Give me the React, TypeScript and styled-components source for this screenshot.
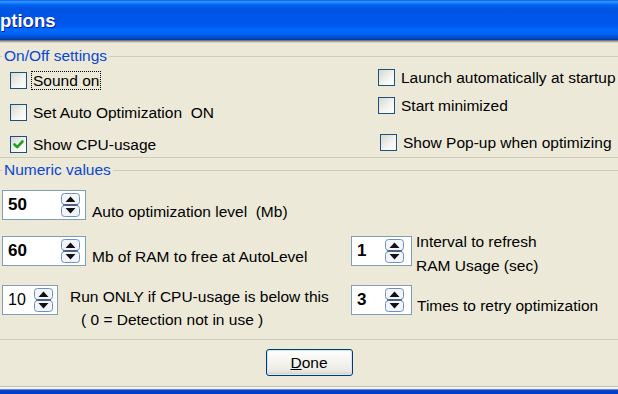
import React from 'react';
import styled, { createGlobalStyle } from 'styled-components';

const Global = createGlobalStyle`
  html, body { margin: 0; padding: 0; background: #ECE9D8; }
  body { font-family: "Liberation Sans", Arial, sans-serif; }
  * { box-sizing: border-box; }
`;

const Window = styled.div`
  width: 618px;
  height: 394px;
  overflow: hidden;
  display: flex;
  flex-direction: column;
  background: #ECE9D8;
  font-family: "Liberation Sans", Arial, sans-serif;
  font-size: 15.5px;
  color: #000;
`;

const TitleBar = styled.div`
  height: 40px;
  flex: none;
  display: flex;
  align-items: center;
  background: linear-gradient(
    to bottom,
    #0058ee 0%,
    #3593ff 4%,
    #288eff 6%,
    #127dff 8%,
    #036ffc 10%,
    #0262ee 14%,
    #0057e5 20%,
    #0054e3 24%,
    #0055eb 56%,
    #005bf5 66%,
    #026afe 76%,
    #0062ef 86%,
    #0052d6 92%,
    #0046c0 96%,
    #003aa8 100%
  );
`;

const TitleText = styled.span`
  color: #fff;
  font-weight: bold;
  font-size: 18.5px;
  padding-top: 2px;
  text-shadow: 1px 1px #0f1c89;
`;

const TitleEdge = styled.div`
  height: 3px;
  flex: none;
  background: linear-gradient(
    to bottom,
    #767676 0,
    #767676 1px,
    #a8a8a8 1px,
    #a8a8a8 2px,
    #d6d2c2 2px
  );
`;

const Body = styled.div`
  flex: 1;
  display: flex;
  flex-direction: column;
  padding-top: 4px;
`;

const Group = styled.fieldset<{ $mt?: number }>`
  margin: ${(p) => p.$mt ?? 0}px -12px 0;
  padding: 0;
  border: 1px solid #cfccbc;
  border-radius: 4px;
  min-width: 0;
`;

const Legend = styled.legend`
  margin-left: 13px;
  padding: 0 2px;
  color: #0a46d4;
  font-size: 15.5px;
  line-height: 18px;
`;

const CheckArea = styled.div`
  height: 92px;
  display: grid;
  grid-template-columns: 368px 1fr;
  padding-left: 21px;
`;

const CheckColumn = styled.div<{ $pt: number; $gap: number }>`
  display: flex;
  flex-direction: column;
  padding-top: ${(p) => p.$pt}px;
  gap: ${(p) => p.$gap}px;
`;

const CheckRow = styled.label<{ $mt?: number; $ml?: number }>`
  display: flex;
  align-items: center;
  gap: 6px;
  height: 17px;
  margin-top: ${(p) => p.$mt ?? 0}px;
  margin-left: ${(p) => p.$ml ?? 0}px;
  white-space: nowrap;
`;

const Box = styled.span`
  width: 17px;
  height: 17px;
  flex: none;
  border: 1px solid #1c5180;
  background: linear-gradient(135deg, #d8d8d2 0%, #f4f4f0 60%, #ffffff 100%);
  display: flex;
  align-items: center;
  justify-content: center;
`;

const FocusText = styled.span`
  outline: 1px dotted #000;
  outline-offset: 0;
  padding: 0 1px;
  margin-left: -1px;
  line-height: 17px;
`;

const NumArea = styled.div`
  height: 160px;
  display: flex;
  flex-direction: column;
  padding: 11px 0 0 13px;
`;

const NumRow = styled.div<{ $mt?: number }>`
  display: grid;
  grid-template-columns: 349px 1fr;
  grid-template-rows: 30px;
  height: 30px;
  flex: none;
  margin-top: ${(p) => p.$mt ?? 0}px;
`;

const NumCell = styled.div`
  display: flex;
  align-items: flex-end;
  height: 30px;
  white-space: nowrap;
`;

const SpinBox = styled.div<{ $w: number; $pr?: number }>`
  width: ${(p) => p.$w}px;
  height: 30px;
  flex: none;
  border: 1px solid #7f9db9;
  background: #fff;
  display: flex;
  align-items: center;
  padding: 0 ${(p) => p.$pr ?? 5}px 0 5px;
`;

const SpinValue = styled.span<{ $bold?: boolean }>`
  flex: 1;
  font-size: ${(p) => (p.$bold ? 17 : 16)}px;
  font-weight: ${(p) => (p.$bold ? 'bold' : 'normal')};
`;

const NumLabel = styled.span<{ $ml?: number; $mb?: number }>`
  margin-left: ${(p) => p.$ml ?? 6}px;
  margin-bottom: ${(p) => p.$mb ?? 0}px;
  line-height: 18px;
`;

const MultiLabel = styled.div<{ $ml: number; $mt: number; $lh: number }>`
  align-self: flex-start;
  margin-left: ${(p) => p.$ml}px;
  margin-top: ${(p) => p.$mt}px;
  line-height: ${(p) => p.$lh}px;
  display: flex;
  flex-direction: column;
`;

const Indented = styled.span<{ $indent: number }>`
  padding-left: ${(p) => p.$indent}px;
`;

const Footer = styled.div`
  height: 46px;
  flex: none;
  display: flex;
  justify-content: center;
  padding-top: 9px;
`;

const DoneButton = styled.button`
  width: 87px;
  height: 27px;
  border: 1px solid #003c74;
  border-radius: 3px;
  background: linear-gradient(to bottom, #ffffff 0%, #f6f5f0 40%, #ecebe6 80%, #d6d0c5 100%);
  box-shadow: inset 0 0 0 1px #cee7ff;
  font-family: "Liberation Sans", Arial, sans-serif;
  font-size: 15.5px;
  color: #000;
  padding: 0;
  u { text-decoration: underline; }
`;

const BottomEdge = styled.div`
  flex: 1;
  background: linear-gradient(
    to bottom,
    #c4c0ae 0,
    #c4c0ae 1px,
    #f4f2ea 1px,
    #f4f2ea 3px,
    #5a8ae8 3px,
    #5a8ae8 4px,
    #0a45d0 4px,
    #0836c4 100%
  );
`;

const Check = () => (
  <svg width="13" height="13" viewBox="0 0 13 13">
    <polyline points="2.5,6.5 5.2,9.2 10.5,3.5" fill="none" stroke="#21a121" strokeWidth="2.6" strokeLinecap="round" strokeLinejoin="round" />
  </svg>
);

const Spinner = () => (
  <svg width="19" height="24" viewBox="0 0 19 24" style={{ flex: 'none' }}>
    <rect x="0.5" y="0.5" width="18" height="11" rx="3" fill="#f2f5fc" stroke="#6f8ec4" />
    <rect x="0.5" y="12.5" width="18" height="11" rx="3" fill="#f2f5fc" stroke="#6f8ec4" />
    <line x1="2" y1="12" x2="17" y2="12" stroke="#2a3550" strokeWidth="1" />
    <path d="M4.5 9 L9.5 3.5 L14.5 9 Z" fill="#111" />
    <path d="M4.5 15 L9.5 20.5 L14.5 15 Z" fill="#111" />
  </svg>
);

const Spin: React.FC<{ value: string; w: number; pr?: number; bold?: boolean }> = ({ value, w, pr, bold }) => (
  <SpinBox $w={w} $pr={pr}>
    <SpinValue $bold={bold}>{value}</SpinValue>
    <Spinner />
  </SpinBox>
);

export default function App() {
  return (
    <>
      <Global />
      <Window>
        <TitleBar>
          <TitleText>ptions</TitleText>
        </TitleBar>
        <TitleEdge />
        <Body>
          <Group $mt={0}>
            <Legend>On/Off settings</Legend>
            <CheckArea>
              <CheckColumn $pt={7} $gap={15}>
                <CheckRow>
                  <Box />
                  <FocusText>Sound on</FocusText>
                </CheckRow>
                <CheckRow>
                  <Box />
                  <span>Set Auto Optimization&nbsp; ON</span>
                </CheckRow>
                <CheckRow>
                  <Box>
                    <Check />
                  </Box>
                  <span>Show CPU-usage</span>
                </CheckRow>
              </CheckColumn>
              <CheckColumn $pt={0} $gap={0}>
                <CheckRow $mt={4}>
                  <Box />
                  <span>Launch automatically at startup</span>
                </CheckRow>
                <CheckRow $mt={11}>
                  <Box />
                  <span>Start minimized</span>
                </CheckRow>
                <CheckRow $mt={20} $ml={2}>
                  <Box />
                  <span>Show Pop-up when optimizing</span>
                </CheckRow>
              </CheckColumn>
            </CheckArea>
          </Group>
          <Group $mt={3}>
            <Legend>Numeric values</Legend>
            <NumArea>
              <NumRow>
                <NumCell>
                  <Spin value="50" w={84} bold />
                  <NumLabel $mb={-1}>Auto optimization level&nbsp; (Mb)</NumLabel>
                </NumCell>
              </NumRow>
              <NumRow $mt={16}>
                <NumCell>
                  <Spin value="60" w={84} bold />
                  <NumLabel>Mb of RAM to free at AutoLevel</NumLabel>
                </NumCell>
                <NumCell>
                  <Spin value="1" w={61} pr={7} bold />
                  <MultiLabel $ml={4} $mt={-6} $lh={24}>
                    <span>Interval to refresh</span>
                    <span>RAM Usage (sec)</span>
                  </MultiLabel>
                </NumCell>
              </NumRow>
              <NumRow $mt={19}>
                <NumCell>
                  <Spin value="10" w={56} pr={4} />
                  <MultiLabel $ml={12} $mt={0} $lh={23}>
                    <span>Run ONLY if CPU-usage is below this</span>
                    <Indented $indent={11}>( 0 = Detection not in use )</Indented>
                  </MultiLabel>
                </NumCell>
                <NumCell>
                  <Spin value="3" w={61} pr={7} bold />
                  <NumLabel $ml={5}>Times to retry optimization</NumLabel>
                </NumCell>
              </NumRow>
            </NumArea>
          </Group>
          <Footer>
            <DoneButton>
              <u>D</u>one
            </DoneButton>
          </Footer>
          <BottomEdge />
        </Body>
      </Window>
    </>
  );
}
